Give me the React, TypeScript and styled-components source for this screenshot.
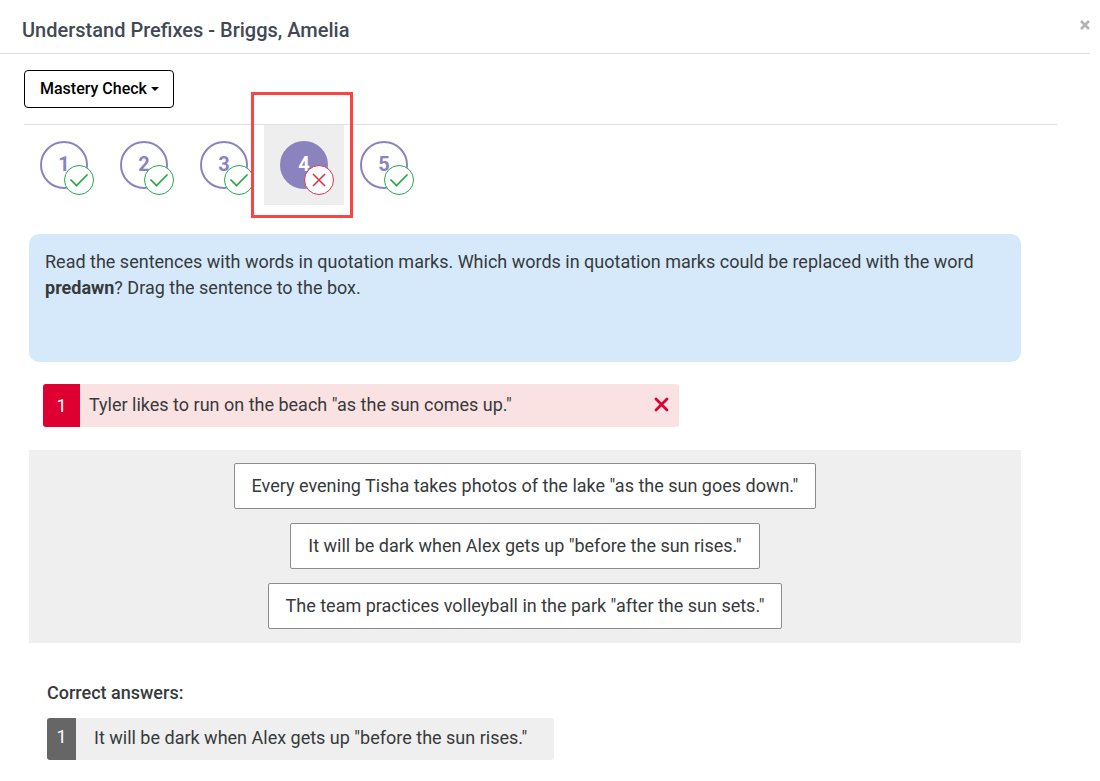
import React from "react";
import styled, { createGlobalStyle, css } from "styled-components";

const GlobalStyle = createGlobalStyle`
  *, *::before, *::after { box-sizing: border-box; }
  body {
    margin: 0;
    background: #fff;
    color: #373a3c;
    font-family: Roboto, "Liberation Sans", sans-serif;
    font-size: 18px;
    line-height: 26px;
  }
  button { font-family: inherit; cursor: pointer; }
`;

const Dialog = styled.main`
  margin-right: 10px;
  padding-bottom: 20px;
`;

const Header = styled.header`
  display: flex;
  align-items: flex-start;
  justify-content: space-between;
  height: 54px;
  padding: 18px 0 0 22px;
  border-bottom: 1px solid #dee0e3;
`;

const Title = styled.h1`
  margin: 0;
  font-size: 20px;
  line-height: 24px;
  font-weight: 500;
  color: #434954;
`;

const CloseButton = styled.button`
  display: flex;
  padding: 2px 0;
  border: 0;
  background: none;
  color: #b3b3b3;
`;

const Content = styled.div`
  padding: 16px 32px 0 24px;
`;

const Toolbar = styled.div`
  padding-bottom: 16px;
  border-bottom: 1px solid #dfe1e3;
`;

const DropdownButton = styled.button`
  display: flex;
  align-items: center;
  gap: 4px;
  height: 38px;
  padding: 0 14px 0 15px;
  border: 1px solid #000;
  border-radius: 4px;
  background: #fff;
  color: #000;
  font-size: 16px;
  line-height: 24px;
  font-weight: 500;
`;

const Caret = styled.span`
  border: 4px solid transparent;
  border-top-color: #000;
  border-bottom: 0;
`;

const Steps = styled.nav`
  display: flex;
`;

const StepButton = styled.button<{ $active?: boolean }>`
  position: relative;
  width: 80px;
  height: 80px;
  padding: 16px;
  border: 0;
  background: ${(p) => (p.$active ? "#efeeee" : "transparent")};
`;

const StepNumber = styled.span<{ $active?: boolean }>`
  display: flex;
  align-items: center;
  justify-content: center;
  width: 48px;
  height: 48px;
  padding-bottom: 2px;
  border: 2px solid #8a83be;
  border-radius: 50%;
  background: ${(p) => (p.$active ? "#8a83be" : "#fff")};
  color: ${(p) => (p.$active ? "#fff" : "#8a83be")};
  font-size: 20px;
  line-height: 24px;
  font-weight: 700;
`;

const Badge = styled.svg`
  position: absolute;
  left: 40px;
  top: 40px;
  z-index: 1;
`;

const Callout = styled.span`
  position: absolute;
  inset: -33px -9px -13px -13px;
  z-index: 2;
  border: 3px solid #fb4545;
  pointer-events: none;
`;

const Question = styled.section`
  margin: 29px 37px 0 5px;
`;

const Prompt = styled.p`
  min-height: 128px;
  margin: 0;
  padding: 15px 16px;
  border-radius: 10px;
  background: #d5e9fa;
  color: #373a3c;
`;

const AnswerRow = styled.div<{ $tone: "wrong" | "plain" }>`
  display: flex;
  border-radius: 3px;
  overflow: hidden;
  ${(p) =>
    p.$tone === "wrong"
      ? css`
          max-width: 636px;
          min-height: 43px;
          margin: 22px 0 0 14px;
          background: #fae2e2;
        `
      : css`
          width: fit-content;
          min-height: 42px;
          background: #efefef;
        `}
`;

const AnswerNumber = styled.span<{ $tone: "wrong" | "plain" }>`
  display: flex;
  align-items: center;
  justify-content: center;
  width: ${(p) => (p.$tone === "wrong" ? 37 : 29)}px;
  padding-bottom: ${(p) => (p.$tone === "wrong" ? 0 : 4)}px;
  background: ${(p) => (p.$tone === "wrong" ? "#dd0031" : "#666")};
  color: #fff;
`;

const AnswerText = styled.span<{ $tone: "wrong" | "plain" }>`
  flex: 1;
  align-self: center;
  padding: ${(p) => (p.$tone === "wrong" ? "0 9px 2px" : "0 27px 2px 18px")};
`;

const WrongIcon = styled.svg`
  align-self: center;
  margin: 0 10px 3px 0;
`;

const ChoicePool = styled.div`
  display: flex;
  flex-direction: column;
  align-items: center;
  gap: 14px;
  margin-top: 23px;
  padding: 13px 12px 14px;
  background: #efefef;
`;

const Choice = styled.button`
  min-height: 46px;
  padding: 9px 17px;
  border: 1px solid #8c8c8c;
  border-radius: 2px;
  background: #fff;
  color: #373a3c;
  font-size: 18px;
  line-height: 26px;
`;

const CorrectAnswers = styled.section`
  margin: 37px 0 0 23px;
`;

const CorrectTitle = styled.h2`
  margin: 0 0 12px;
  font-size: 18px;
  line-height: 26px;
  font-weight: 500;
`;

const steps = [
  { number: 1, correct: true },
  { number: 2, correct: true },
  { number: 3, correct: true },
  { number: 4, correct: false },
  { number: 5, correct: true },
];

const currentStep = 4;

const choices = [
  'Every evening Tisha takes photos of the lake "as the sun goes down."',
  'It will be dark when Alex gets up "before the sun rises."',
  'The team practices volleyball in the park "after the sun sets."',
];

function ResultBadge({ correct }: { correct: boolean }) {
  const color = correct ? "#28a745" : "#dc3545";
  return (
    <Badge width="30" height="30" viewBox="0 0 30 30" fill="none" stroke={color} aria-hidden="true">
      <circle cx="15" cy="15" r="14.5" fill="#fff" />
      {correct ? (
        <path d="M6.5 14.5 12.5 20.5 23.5 9.5" strokeWidth="1.7" />
      ) : (
        <path d="M9 9 21 21M21 9 9 21" strokeWidth="1.6" />
      )}
    </Badge>
  );
}

export default function App() {
  return (
    <>
      <GlobalStyle />
      <Dialog>
        <Header>
          <Title>Understand Prefixes - Briggs, Amelia</Title>
          <CloseButton type="button" aria-label="Close">
            <svg width="10" height="10" viewBox="0 0 10 10" stroke="currentColor" strokeWidth="2.6">
              <path d="M1 1 9 9M9 1 1 9" />
            </svg>
          </CloseButton>
        </Header>
        <Content>
          <Toolbar>
            <DropdownButton type="button" aria-haspopup="menu">
              Mastery Check
              <Caret />
            </DropdownButton>
          </Toolbar>
          <Steps aria-label="Questions">
            {steps.map(({ number, correct }) => {
              const active = number === currentStep;
              return (
                <StepButton
                  key={number}
                  type="button"
                  $active={active}
                  aria-current={active ? "step" : undefined}
                >
                  <StepNumber $active={active}>{number}</StepNumber>
                  <ResultBadge correct={correct} />
                  {active && <Callout />}
                </StepButton>
              );
            })}
          </Steps>
          <Question>
            <Prompt>
              Read the sentences with words in quotation marks. Which words in quotation marks
              could be replaced with the word <strong>predawn</strong>? Drag the sentence to the
              box.
            </Prompt>
            <AnswerRow $tone="wrong">
              <AnswerNumber $tone="wrong">1</AnswerNumber>
              <AnswerText $tone="wrong">
                Tyler likes to run on the beach "as the sun comes up."
              </AnswerText>
              <WrongIcon
                width="15"
                height="15"
                viewBox="0 0 15 15"
                stroke="#dd0031"
                strokeWidth="2.8"
                strokeLinecap="round"
                aria-hidden="true"
              >
                <path d="M2 2 13 13M13 2 2 13" />
              </WrongIcon>
            </AnswerRow>
            <ChoicePool>
              {choices.map((text) => (
                <Choice key={text} type="button">
                  {text}
                </Choice>
              ))}
            </ChoicePool>
          </Question>
          <CorrectAnswers>
            <CorrectTitle>Correct answers:</CorrectTitle>
            <AnswerRow $tone="plain">
              <AnswerNumber $tone="plain">1</AnswerNumber>
              <AnswerText $tone="plain">{choices[1]}</AnswerText>
            </AnswerRow>
          </CorrectAnswers>
        </Content>
      </Dialog>
    </>
  );
}
